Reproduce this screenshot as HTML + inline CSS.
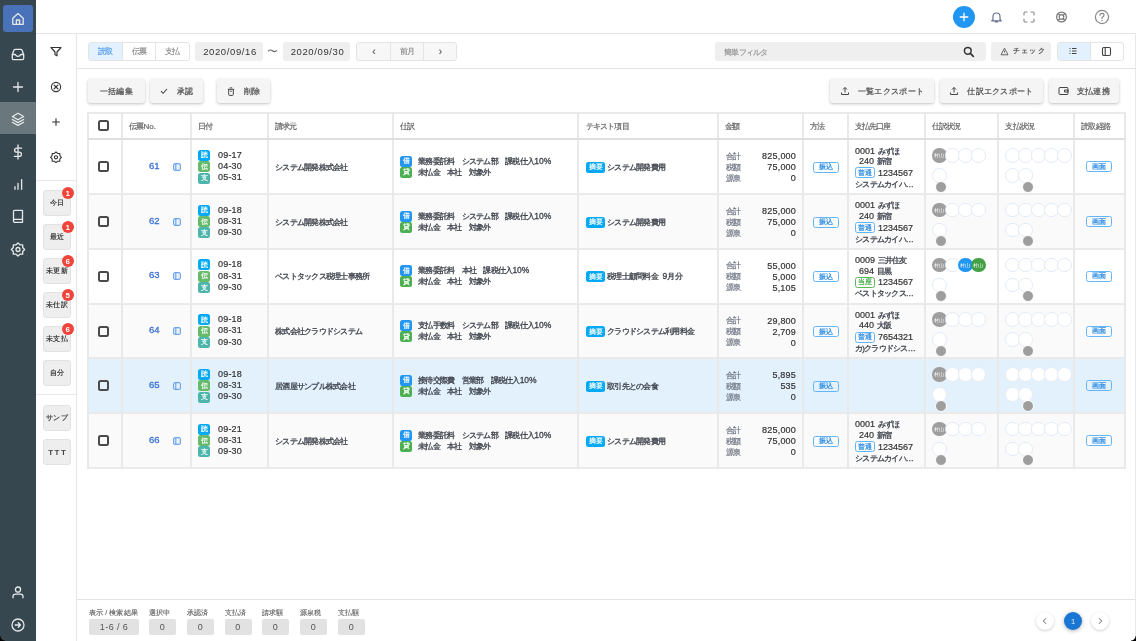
<!DOCTYPE html><html><head><meta charset="utf-8"><style>
*{box-sizing:border-box;margin:0;padding:0}
html,body{width:1136px;height:641px;overflow:hidden;background:#fff;font-family:"Liberation Sans",sans-serif;color:#3a3f47}
.a{position:absolute}
.side{left:0;top:0;width:36px;height:641px;background:#37474f}
.hdr{left:36px;top:0;width:1100px;height:34px;border-bottom:1px solid #e4e4e4;background:#fff}
.sub{left:36px;top:34px;width:41px;height:607px;border-right:1px solid #e4e4e4;background:#fff}
.sbtn{position:absolute;left:7px;width:28px;height:26px;background:#eeeeee;border:1px solid #e2e2e2;border-radius:3px;font-size:7px;font-weight:bold;color:#444;display:flex;align-items:center;justify-content:center;letter-spacing:0.4px}
.badge{position:absolute;width:12px;height:12px;border-radius:50%;background:#f0433a;color:#fff;font-size:8px;font-weight:bold;display:flex;align-items:center;justify-content:center;right:-4px;top:-4px}
.vline{position:absolute;background:#e9e9e9}
.hline{position:absolute;background:#eaeaea}
.th{position:absolute;top:113px;height:26px;font-size:8px;letter-spacing:-0.8px;color:#666;-webkit-text-stroke:0.2px #666;display:flex;align-items:center}
.btn{position:absolute;top:79px;height:24px;background:#f5f5f5;border-radius:3px;box-shadow:0 1px 3px rgba(0,0,0,.25);font-size:8px;-webkit-text-stroke:0.25px #555;color:#555;display:flex;align-items:center;justify-content:center;letter-spacing:0.3px}
.cb{position:absolute;width:11px;height:11px;border:2px solid #4a4a4a;border-radius:2.5px}
.tag{position:absolute;display:flex;align-items:center;justify-content:center;width:12px;height:11px;border-radius:2.5px;color:#fff;font-size:7px;-webkit-text-stroke:0.2px #fff}
.t{position:absolute;white-space:nowrap}
.circ{position:absolute;width:14.5px;height:14.5px;border-radius:50%;border:1px solid #e3eaf5;background:#fff}
.gcirc{position:absolute;width:14.5px;height:14.5px;border-radius:50%;background:#9e9e9e;color:#fff;font-size:5px;display:flex;align-items:center;justify-content:center}
.dot{position:absolute;width:12px;height:12px;border-radius:50%;background:#9e9e9e;border:1px solid #fff}
.ob{position:absolute;display:flex;align-items:center;justify-content:center;border:1.1px solid #64b5f6;color:#2f8fe6;border-radius:2.5px;font-size:7px;-webkit-text-stroke:0.25px currentColor}
.fl{position:absolute;top:607.5px;font-size:7px;letter-spacing:0.1px;-webkit-text-stroke:0.15px #666;color:#666}
.fv{position:absolute;top:619px;height:16px;background:#e2e2e2;border-radius:2px;font-size:9px;letter-spacing:0.4px;color:#555;display:flex;align-items:center;justify-content:center}
</style></head><body><div style="position:absolute;left:0;top:0;width:1136px;height:641px;overflow:hidden;will-change:transform">

<div class="a side">
<div class="a" style="left:3px;top:5px;width:30px;height:27px;background:#4a72b8;border-radius:3px"></div>
<div class="a" style="left:0;top:102px;width:36px;height:32px;background:#6a777d"></div>
<svg style="position:absolute;left:11px;top:12px" width="14" height="14" viewBox="0 0 14 14"><path d="M1.8 6.2 L7 1.6 L12.2 6.2 V12.3 H1.8 Z M5.4 12.3 V8 H8.6 V12.3" stroke="#e6e9ea" stroke-width="1.3" fill="none" stroke-linecap="round" stroke-linejoin="round"/></svg>
<svg style="position:absolute;left:11px;top:48px" width="14" height="13" viewBox="0 0 14 13"><path d="M1.3 6.5 L2.9 2.3 Q3.3 1.4 4.3 1.4 H9.7 Q10.7 1.4 11.1 2.3 L12.7 6.5 V10.3 Q12.7 11.6 11.4 11.6 H2.6 Q1.3 11.6 1.3 10.3 Z M1.3 6.5 H4.3 Q5.1 8.3 7 8.3 Q8.9 8.3 9.7 6.5 H12.7" stroke="#e6e9ea" stroke-width="1.3" fill="none" stroke-linecap="round" stroke-linejoin="round"/></svg>
<svg style="position:absolute;left:12px;top:81px" width="12" height="12" viewBox="0 0 12 12"><path d="M6 1.5 V10.5 M1.5 6 H10.5" stroke="#e6e9ea" stroke-width="1.3" fill="none" stroke-linecap="round" stroke-linejoin="round" stroke-width="1.4"/></svg>
<svg style="position:absolute;left:11px;top:112px" width="14" height="15" viewBox="0 0 14 15"><path d="M7 1.3 L12.6 4.5 L7 7.7 L1.4 4.5 Z M1.4 7.5 L7 10.6 L12.6 7.5 M1.4 10.3 L7 13.4 L12.6 10.3" stroke="#e6e9ea" stroke-width="1.3" fill="none" stroke-linecap="round" stroke-linejoin="round"/></svg>
<svg style="position:absolute;left:12px;top:144px" width="12" height="16" viewBox="0 0 12 16"><path d="M6 1 V15 M9.6 4.2 H5 Q2.6 4.2 2.6 6.2 Q2.6 8.2 5 8.2 H7 Q9.4 8.2 9.4 10.2 Q9.4 12.4 7 12.4 H2.4" stroke="#e6e9ea" stroke-width="1.3" fill="none" stroke-linecap="round" stroke-linejoin="round" stroke-width="1.4"/></svg>
<svg style="position:absolute;left:12px;top:177px" width="12" height="14" viewBox="0 0 12 14"><path d="M3 12.3 V9.7 M6 12.3 V6.3 M9.6 12.3 V2.6" stroke="#e6e9ea" stroke-width="1.3" fill="none" stroke-linecap="round" stroke-linejoin="round" stroke-width="1.6"/></svg>
<svg style="position:absolute;left:11px;top:208px" width="14" height="16" viewBox="0 0 14 16"><path d="M2.5 3.3 Q2.5 2.3 3.5 2.3 H11.5 V14.3 H3.5 Q2.5 14.3 2.5 13.3 Z M2.5 11.3 H11.5" stroke="#e6e9ea" stroke-width="1.3" fill="none" stroke-linecap="round" stroke-linejoin="round"/></svg>
<svg style="position:absolute;left:10px;top:242px" width="16" height="16" viewBox="0 0 16 16"><path d="M8.00 0.90 L9.95 2.79 L12.67 2.83 L12.71 5.55 L14.60 7.50 L12.71 9.45 L12.67 12.17 L9.95 12.21 L8.00 14.10 L6.05 12.21 L3.33 12.17 L3.29 9.45 L1.40 7.50 L3.29 5.55 L3.33 2.83 L6.05 2.79 Z" stroke="#e6e9ea" stroke-width="1.3" fill="none" stroke-linecap="round" stroke-linejoin="round"/><circle cx="8" cy="7.5" r="2" stroke="#e6e9ea" stroke-width="1.3" fill="none" stroke-linecap="round" stroke-linejoin="round"/></svg>
<svg style="position:absolute;left:11px;top:585px" width="14" height="14" viewBox="0 0 14 14"><circle cx="7" cy="4.6" r="2.6" stroke="#e6e9ea" stroke-width="1.3" fill="none" stroke-linecap="round" stroke-linejoin="round"/><path d="M2 12.8 V11.5 Q2 9.2 4.5 9.2 H9.5 Q12 9.2 12 11.5 V12.8" stroke="#e6e9ea" stroke-width="1.3" fill="none" stroke-linecap="round" stroke-linejoin="round"/></svg>
<svg style="position:absolute;left:11px;top:618px" width="14" height="14" viewBox="0 0 14 14"><circle cx="7" cy="7" r="6" stroke="#e6e9ea" stroke-width="1.3" fill="none" stroke-linecap="round" stroke-linejoin="round"/><path d="M4.2 7 H9.5 M7.3 4.8 L9.5 7 L7.3 9.2" stroke="#e6e9ea" stroke-width="1.3" fill="none" stroke-linecap="round" stroke-linejoin="round"/></svg>
</div>
<div class="a hdr"></div>
<div class="a" style="left:953px;top:6px;width:22px;height:22px;border-radius:50%;background:#2196f3"></div>
<svg style="position:absolute;left:958px;top:11px" width="12" height="12" viewBox="0 0 12 12"><path d="M6 2.2 V9.8 M2.2 6 H9.8" stroke="#fff" stroke-width="1.3" stroke-linecap="round"/></svg>
<svg style="position:absolute;left:990px;top:11px" width="13" height="12" viewBox="0 0 13 12"><path d="M3 8.8 V5.5 Q3 2 6.5 2 Q10 2 10 5.5 V8.8 L11.3 9.8 H1.7 Z M5.3 11 H7.7" stroke="#6b7390" stroke-width="1.2" fill="none" stroke-linejoin="round" stroke-linecap="round"/></svg>
<svg style="position:absolute;left:1023px;top:11px" width="12" height="12" viewBox="0 0 12 12"><path d="M1 4 V2 Q1 1 2 1 H4 M8 1 H10 Q11 1 11 2 V4 M11 8 V10 Q11 11 10 11 H8 M4 11 H2 Q1 11 1 10 V8" stroke="#888" stroke-width="1.1" fill="none" stroke-linecap="round"/></svg>
<svg style="position:absolute;left:1055px;top:11px" width="13" height="12" viewBox="0 0 13 12"><circle cx="6.5" cy="6" r="4.9" stroke="#777" stroke-width="1.2" fill="none"/><circle cx="6.5" cy="6" r="2.3" stroke="#777" stroke-width="1.2" fill="none"/><path d="M3 2.5 L4.9 4.4 M10 2.5 L8.1 4.4 M3 9.5 L4.9 7.6 M10 9.5 L8.1 7.6" stroke="#777" stroke-width="1.2"/></svg>
<svg style="position:absolute;left:1094px;top:9px" width="16" height="16" viewBox="0 0 16 16"><circle cx="8" cy="8" r="6.6" stroke="#888" stroke-width="1.2" fill="none"/><path d="M6 6.3 Q6 4.3 8 4.3 Q10 4.3 10 6.1 Q10 7.3 8.7 7.9 Q8 8.3 8 9.4" stroke="#888" stroke-width="1.2" fill="none" stroke-linecap="round"/><circle cx="8" cy="11.4" r="0.75" fill="#888"/></svg>
<div class="a sub">
<svg style="position:absolute;left:14px;top:12px" width="12" height="11" viewBox="0 0 12 11"><path d="M1 1.5 H11 L7 6 V9.8 L5 8.8 V6 Z" stroke="#333" stroke-width="1.2" fill="none" stroke-linejoin="round"/></svg>
<svg style="position:absolute;left:14px;top:47px" width="12" height="12" viewBox="0 0 12 12"><circle cx="6" cy="6" r="4.6" stroke="#333" stroke-width="1.1" fill="none"/><path d="M4.1 4.1 L7.9 7.9 M7.9 4.1 L4.1 7.9" stroke="#333" stroke-width="1.3" stroke-linecap="round"/></svg>
<svg style="position:absolute;left:14px;top:82px" width="12" height="12" viewBox="0 0 12 12"><path d="M6 2.2 V9.8 M2.2 6 H9.8" stroke="#333" stroke-width="1.1"/></svg>
<svg style="position:absolute;left:13px;top:116px" width="14" height="14" viewBox="0 0 14 14"><path d="M7.00 1.90 L8.61 3.42 L10.82 3.48 L10.88 5.69 L12.40 7.30 L10.88 8.91 L10.82 11.12 L8.61 11.18 L7.00 12.70 L5.39 11.18 L3.18 11.12 L3.12 8.91 L1.60 7.30 L3.12 5.69 L3.18 3.48 L5.39 3.42 Z" stroke="#333" stroke-width="1.1" fill="none" stroke-linejoin="round"/><circle cx="7" cy="7.3" r="1.6" stroke="#333" stroke-width="1.1" fill="none"/></svg>
<div class="a" style="left:0;top:146px;width:40px;height:1px;background:#e8e8e8"></div>
<div class="sbtn" style="top:156px">今日<div class="badge">1</div></div>
<div class="sbtn" style="top:190px">最近<div class="badge">1</div></div>
<div class="sbtn" style="top:224px">未更新<div class="badge">6</div></div>
<div class="sbtn" style="top:258px">未仕訳<div class="badge">5</div></div>
<div class="sbtn" style="top:292px">未支払<div class="badge">6</div></div>
<div class="sbtn" style="top:326px">自分</div>
<div class="a" style="left:0;top:360px;width:40px;height:1px;background:#e8e8e8"></div>
<div class="sbtn" style="top:371px">サンプ</div>
<div class="sbtn" style="top:405px"><span style="font-size:8px;letter-spacing:1.5px;margin-left:1.5px">TTT</span></div>
</div>
<div class="a" style="left:1135px;top:34px;width:1px;height:607px;background:#e8e8e8"></div>
<div class="a" style="left:77px;top:68px;width:1058px;height:1px;background:#e4e4e4"></div>
<div class="a" style="left:88px;top:42px;width:102px;height:19px;border:1px solid #e4e4e4;border-radius:3px;display:flex;font-size:8px;letter-spacing:-0.8px;-webkit-text-stroke:0.15px currentColor;color:#888;overflow:hidden"><div style="width:34px;background:#e3f0fd;color:#4a98ea;display:flex;align-items:center;justify-content:center;border-right:1px solid #e4e4e4">読取</div><div style="width:33px;display:flex;align-items:center;justify-content:center;border-right:1px solid #e4e4e4">伝票</div><div style="flex:1;display:flex;align-items:center;justify-content:center">支払</div></div>
<div class="a" style="left:195px;top:42px;width:68px;height:19px;background:#efefef;border-radius:3px;font-size:9.5px;letter-spacing:0.6px;padding-left:2px;color:#333;display:flex;align-items:center;justify-content:center">2020/09/16</div>
<div class="t" style="left:267px;top:44px;font-size:11px;color:#666">〜</div>
<div class="a" style="left:283px;top:42px;width:67px;height:19px;background:#efefef;border-radius:3px;font-size:9.5px;letter-spacing:0.6px;padding-left:2px;color:#333;display:flex;align-items:center;justify-content:center">2020/09/30</div>
<div class="a" style="left:356px;top:42px;width:101px;height:19px;border:1px solid #e4e4e4;border-radius:3px;background:#f7f7f7;display:flex;font-size:8px;letter-spacing:-0.8px;-webkit-text-stroke:0.15px currentColor;color:#888"><div style="width:34px;display:flex;align-items:center;justify-content:center;border-right:1px solid #e4e4e4;font-size:10px;color:#555">‹</div><div style="width:33px;display:flex;align-items:center;justify-content:center;border-right:1px solid #e4e4e4">前月</div><div style="flex:1;display:flex;align-items:center;justify-content:center;font-size:10px;color:#555">›</div></div>
<div class="a" style="left:715px;top:42px;width:271px;height:19px;background:#efefef;border-radius:3px"></div>
<div class="t" style="left:724px;top:46.5px;font-size:8px;letter-spacing:-0.73px;-webkit-text-stroke:0.2px #999;color:#999">簡単フィルタ</div>
<svg style="position:absolute;left:963px;top:46px" width="12" height="12" viewBox="0 0 12 12"><circle cx="4.8" cy="4.8" r="3.4" stroke="#333" stroke-width="1.5" fill="none"/><path d="M7.3 7.3 L10.3 10.3" stroke="#333" stroke-width="1.7" stroke-linecap="round"/></svg>
<div class="a" style="left:991px;top:42px;width:60px;height:19px;background:#efefef;border-radius:3px"></div>
<svg style="position:absolute;left:1000px;top:47px" width="9" height="9" viewBox="0 0 9 9"><path d="M4.5 1.2 L8 7.8 H1 Z M4.5 3.6 V5.4 M4.5 6.5 V6.7" stroke="#555" stroke-width="0.9" fill="none" stroke-linejoin="round"/></svg>
<div class="t" style="left:1013px;top:46px;font-size:7px;font-weight:bold;color:#555;letter-spacing:1.2px">チェック</div>
<div class="a" style="left:1057px;top:42px;width:67px;height:19px;border:1px solid #e4e4e4;border-radius:3px;display:flex;overflow:hidden"><div style="width:33px;background:#e3f0fd;border-right:1px solid #e4e4e4"></div><div style="flex:1"></div></div>
<svg style="position:absolute;left:1068px;top:46px" width="10" height="10" viewBox="0 0 10 10"><path d="M1.5 2.5 H2.5 M1.5 5 H2.5 M1.5 7.5 H2.5 M4 2.5 H8.5 M4 5 H8.5 M4 7.5 H8.5" stroke="#444" stroke-width="1.2"/></svg>
<svg style="position:absolute;left:1101px;top:46px" width="11" height="11" viewBox="0 0 11 11"><rect x="1.5" y="1.5" width="8" height="8" rx="1.2" stroke="#444" stroke-width="1.1" fill="none"/><path d="M4.2 1.5 V9.5" stroke="#444" stroke-width="1.1"/></svg>
<div class="btn" style="left:88px;width:57px">一括編集</div>
<div class="btn" style="left:150px;width:53px"><svg width="8" height="8" viewBox="0 0 8 8" style="margin-right:9px"><path d="M1 4.2 L3.1 6.3 L7 2" stroke="#444" stroke-width="1.1" fill="none"/></svg>承認</div>
<div class="btn" style="left:217px;width:53px"><svg width="8" height="9" viewBox="0 0 8 9" style="margin-right:9px"><path d="M0.8 2.3 H7.2 M2.8 0.9 H5.2 M1.7 2.3 V7.5 Q1.7 8.4 2.6 8.4 H5.4 Q6.3 8.4 6.3 7.5 V2.3 M3.2 4.2 H4.8" stroke="#444" stroke-width="1" fill="none"/></svg>削除</div>
<div class="btn" style="left:830px;width:104px"><svg width="10" height="10" viewBox="0 0 10 10" style="margin-right:8px"><path d="M1.5 6.5 V8.5 H8.5 V6.5 M5 6.5 V1.5 M3 3.5 L5 1.5 L7 3.5" stroke="#444" stroke-width="1" fill="none"/></svg>一覧エクスポート</div>
<div class="btn" style="left:940px;width:103px"><svg width="10" height="10" viewBox="0 0 10 10" style="margin-right:8px"><path d="M1.5 6.5 V8.5 H8.5 V6.5 M5 6.5 V1.5 M3 3.5 L5 1.5 L7 3.5" stroke="#444" stroke-width="1" fill="none"/></svg>仕訳エクスポート</div>
<div class="btn" style="left:1049px;width:70px"><svg width="11" height="10" viewBox="0 0 11 10" style="margin-right:8px"><rect x="1" y="1.5" width="9" height="7" rx="1" stroke="#444" stroke-width="1" fill="none"/><path d="M6.5 4 H10 V6 H6.5 Z" stroke="#444" stroke-width="1" fill="none"/></svg>支払連携</div>
<div class="a" style="left:88px;top:139.5px;width:1037px;height:54.75px;background:#fff"></div>
<div class="a" style="left:88px;top:194.3px;width:1037px;height:54.75px;background:#fafafa"></div>
<div class="a" style="left:88px;top:249.0px;width:1037px;height:54.75px;background:#fff"></div>
<div class="a" style="left:88px;top:303.8px;width:1037px;height:54.75px;background:#fafafa"></div>
<div class="a" style="left:88px;top:358.5px;width:1037px;height:54.75px;background:#e3f1fd"></div>
<div class="a" style="left:88px;top:413.3px;width:1037px;height:54.75px;background:#fafafa"></div>
<div class="hline" style="left:88px;top:112px;width:1037px;height:2px"></div>
<div class="hline" style="left:88px;top:193px;width:1037px;height:2px"></div>
<div class="hline" style="left:88px;top:248px;width:1037px;height:2px"></div>
<div class="hline" style="left:88px;top:303px;width:1037px;height:2px"></div>
<div class="hline" style="left:88px;top:357px;width:1037px;height:2px"></div>
<div class="hline" style="left:88px;top:412px;width:1037px;height:2px"></div>
<div class="hline" style="left:88px;top:467px;width:1037px;height:2px"></div>
<div class="vline" style="left:87px;top:112px;width:2px;height:357px"></div>
<div class="vline" style="left:121px;top:112px;width:2px;height:357px"></div>
<div class="vline" style="left:190px;top:112px;width:2px;height:357px"></div>
<div class="vline" style="left:267px;top:112px;width:2px;height:357px"></div>
<div class="vline" style="left:392px;top:112px;width:2px;height:357px"></div>
<div class="vline" style="left:577px;top:112px;width:2px;height:357px"></div>
<div class="vline" style="left:717px;top:112px;width:2px;height:357px"></div>
<div class="vline" style="left:802px;top:112px;width:2px;height:357px"></div>
<div class="vline" style="left:847px;top:112px;width:2px;height:357px"></div>
<div class="vline" style="left:924px;top:112px;width:2px;height:357px"></div>
<div class="vline" style="left:997px;top:112px;width:2px;height:357px"></div>
<div class="vline" style="left:1073px;top:112px;width:2px;height:357px"></div>
<div class="vline" style="left:1124px;top:112px;width:2px;height:357px"></div>
<div class="hline" style="left:88px;top:138px;width:1037px;height:2px;background:#dedede"></div>
<div class="cb" style="left:98px;top:120px"></div>
<div class="th" style="left:129px">伝票<span style="letter-spacing:0;font-size:8px">No.</span></div>
<div class="th" style="left:198px">日付</div>
<div class="th" style="left:275px">請求元</div>
<div class="th" style="left:400px">仕訳</div>
<div class="th" style="left:585.5px">テキスト項目</div>
<div class="th" style="left:725.3px">金額</div>
<div class="th" style="left:810px">方法</div>
<div class="th" style="left:854.5px">支払先口座</div>
<div class="th" style="left:931.6px">仕訳状況</div>
<div class="th" style="left:1005.4px">支払状況</div>
<div class="th" style="left:1081.3px">読取経路</div>
<div class="cb" style="left:98px;top:161.4px"></div>
<div class="t" style="left:149px;top:159.9px;font-size:9.5px;-webkit-text-stroke:0.3px #3b6fd6;color:#3b6fd6">61</div>
<svg style="position:absolute;left:173px;top:162.875px" width="8" height="8" viewBox="0 0 8 8"><rect x="0.6" y="0.6" width="6.8" height="6.8" rx="1.5" stroke="#6aa3e8" stroke-width="1.1" fill="#e8f1fc"/><path d="M2.8 0.6 V7.4" stroke="#6aa3e8" stroke-width="1.1"/></svg>
<div class="tag" style="left:198px;top:149.9px;background:#03a9f4">読</div>
<div class="t" style="left:218px;top:149.7px;font-size:9px;letter-spacing:0.2px;-webkit-text-stroke:0.2px #333;color:#333">09-17</div>
<div class="tag" style="left:198px;top:161.2px;background:#66bb6a">伝</div>
<div class="t" style="left:218px;top:161.0px;font-size:9px;letter-spacing:0.2px;-webkit-text-stroke:0.2px #333;color:#333">04-30</div>
<div class="tag" style="left:198px;top:172.5px;background:#4db6ac">支</div>
<div class="t" style="left:218px;top:172.3px;font-size:9px;letter-spacing:0.2px;-webkit-text-stroke:0.2px #333;color:#333">05-31</div>
<div class="t" style="left:275px;top:161.9px;font-size:8px;letter-spacing:-0.74px;-webkit-text-stroke:0.3px #3e434c;color:#3e434c">システム開発株式会社</div>
<div class="tag" style="left:400px;top:155.9px;background:#2196f3">借</div>
<div class="tag" style="left:400px;top:166.9px;background:#4caf50">貸</div>
<div class="t" style="left:418px;top:155.9px;font-size:8px;letter-spacing:-0.74px;-webkit-text-stroke:0.3px #3e434c;color:#3e434c">業務委託料　システム部　課税仕入<span style="font-size:8.5px;letter-spacing:0">10%</span></div>
<div class="t" style="left:418px;top:166.9px;font-size:8px;letter-spacing:-0.74px;-webkit-text-stroke:0.3px #3e434c;color:#3e434c">未払金　本社　対象外</div>
<div class="tag" style="left:586px;top:161.9px;background:#03a9f4;width:19px">摘要</div>
<div class="t" style="left:607px;top:161.9px;font-size:8px;letter-spacing:-0.74px;-webkit-text-stroke:0.3px #3e434c;color:#3e434c">システム開発費用</div>
<div class="t" style="left:726px;top:150.9px;font-size:8px;letter-spacing:-1.15px;-webkit-text-stroke:0.2px #6f7684;color:#6f7684">合計</div>
<div class="t" style="right:340px;top:151.3px;font-size:9px;letter-spacing:0.2px;-webkit-text-stroke:0.2px #333;color:#333">825,000</div>
<div class="t" style="left:726px;top:161.9px;font-size:8px;letter-spacing:-1.15px;-webkit-text-stroke:0.2px #6f7684;color:#6f7684">税額</div>
<div class="t" style="right:340px;top:162.3px;font-size:9px;letter-spacing:0.2px;-webkit-text-stroke:0.2px #333;color:#333">75,000</div>
<div class="t" style="left:726px;top:172.9px;font-size:8px;letter-spacing:-1.15px;-webkit-text-stroke:0.2px #6f7684;color:#6f7684">源泉</div>
<div class="t" style="right:340px;top:173.3px;font-size:9px;letter-spacing:0.2px;-webkit-text-stroke:0.2px #333;color:#333">0</div>
<div class="ob" style="left:813px;top:161.9px;width:26px;height:11px">振込</div>
<div class="t" style="left:855px;top:145.6px;font-size:9px;-webkit-text-stroke:0.2px #333;color:#333">0001 <span style="font-size:8px;letter-spacing:-0.74px;-webkit-text-stroke:0.3px #3e434c;color:#3e434c">みずほ</span></div>
<div class="t" style="left:859px;top:156.1px;font-size:9px;-webkit-text-stroke:0.2px #333;color:#333">240 <span style="font-size:8px;letter-spacing:-0.74px;-webkit-text-stroke:0.3px #3e434c;color:#3e434c">新宿</span></div>
<div class="ob" style="left:855px;top:167.2px;width:20px;height:11px;border-color:#64b5f6;color:#2f8fe6">普通</div>
<div class="t" style="left:878px;top:167.7px;font-size:9px;-webkit-text-stroke:0.2px #333;color:#333">1234567</div>
<div class="t" style="left:855px;top:178.9px;font-size:8px;letter-spacing:-0.74px;-webkit-text-stroke:0.3px #3e434c;color:#3e434c">システムカイハ…</div>
<div class="gcirc" style="left:932px;top:148.0px">村山</div>
<div class="circ" style="left:945px;top:148.0px"></div>
<div class="circ" style="left:958px;top:148.0px"></div>
<div class="circ" style="left:971px;top:148.0px"></div>
<div class="circ" style="left:932px;top:168.0px"></div>
<div class="dot" style="left:934.5px;top:180.5px"></div>
<div class="circ" style="left:1005px;top:148.0px"></div>
<div class="circ" style="left:1018px;top:148.0px"></div>
<div class="circ" style="left:1031px;top:148.0px"></div>
<div class="circ" style="left:1044px;top:148.0px"></div>
<div class="circ" style="left:1057px;top:148.0px"></div>
<div class="circ" style="left:1005px;top:168.0px"></div>
<div class="circ" style="left:1018px;top:168.0px"></div>
<div class="dot" style="left:1021.5px;top:180.5px"></div>
<div class="ob" style="left:1086px;top:161.4px;width:26px;height:11px">画面</div>
<div class="cb" style="left:98px;top:216.2px"></div>
<div class="t" style="left:149px;top:214.7px;font-size:9.5px;-webkit-text-stroke:0.3px #3b6fd6;color:#3b6fd6">62</div>
<svg style="position:absolute;left:173px;top:217.675px" width="8" height="8" viewBox="0 0 8 8"><rect x="0.6" y="0.6" width="6.8" height="6.8" rx="1.5" stroke="#6aa3e8" stroke-width="1.1" fill="#e8f1fc"/><path d="M2.8 0.6 V7.4" stroke="#6aa3e8" stroke-width="1.1"/></svg>
<div class="tag" style="left:198px;top:204.7px;background:#03a9f4">読</div>
<div class="t" style="left:218px;top:204.5px;font-size:9px;letter-spacing:0.2px;-webkit-text-stroke:0.2px #333;color:#333">09-18</div>
<div class="tag" style="left:198px;top:216.0px;background:#66bb6a">伝</div>
<div class="t" style="left:218px;top:215.8px;font-size:9px;letter-spacing:0.2px;-webkit-text-stroke:0.2px #333;color:#333">08-31</div>
<div class="tag" style="left:198px;top:227.3px;background:#4db6ac">支</div>
<div class="t" style="left:218px;top:227.1px;font-size:9px;letter-spacing:0.2px;-webkit-text-stroke:0.2px #333;color:#333">09-30</div>
<div class="t" style="left:275px;top:216.7px;font-size:8px;letter-spacing:-0.74px;-webkit-text-stroke:0.3px #3e434c;color:#3e434c">システム開発株式会社</div>
<div class="tag" style="left:400px;top:210.7px;background:#2196f3">借</div>
<div class="tag" style="left:400px;top:221.7px;background:#4caf50">貸</div>
<div class="t" style="left:418px;top:210.7px;font-size:8px;letter-spacing:-0.74px;-webkit-text-stroke:0.3px #3e434c;color:#3e434c">業務委託料　システム部　課税仕入<span style="font-size:8.5px;letter-spacing:0">10%</span></div>
<div class="t" style="left:418px;top:221.7px;font-size:8px;letter-spacing:-0.74px;-webkit-text-stroke:0.3px #3e434c;color:#3e434c">未払金　本社　対象外</div>
<div class="tag" style="left:586px;top:216.7px;background:#03a9f4;width:19px">摘要</div>
<div class="t" style="left:607px;top:216.7px;font-size:8px;letter-spacing:-0.74px;-webkit-text-stroke:0.3px #3e434c;color:#3e434c">システム開発費用</div>
<div class="t" style="left:726px;top:205.7px;font-size:8px;letter-spacing:-1.15px;-webkit-text-stroke:0.2px #6f7684;color:#6f7684">合計</div>
<div class="t" style="right:340px;top:206.1px;font-size:9px;letter-spacing:0.2px;-webkit-text-stroke:0.2px #333;color:#333">825,000</div>
<div class="t" style="left:726px;top:216.7px;font-size:8px;letter-spacing:-1.15px;-webkit-text-stroke:0.2px #6f7684;color:#6f7684">税額</div>
<div class="t" style="right:340px;top:217.1px;font-size:9px;letter-spacing:0.2px;-webkit-text-stroke:0.2px #333;color:#333">75,000</div>
<div class="t" style="left:726px;top:227.7px;font-size:8px;letter-spacing:-1.15px;-webkit-text-stroke:0.2px #6f7684;color:#6f7684">源泉</div>
<div class="t" style="right:340px;top:228.1px;font-size:9px;letter-spacing:0.2px;-webkit-text-stroke:0.2px #333;color:#333">0</div>
<div class="ob" style="left:813px;top:216.7px;width:26px;height:11px">振込</div>
<div class="t" style="left:855px;top:200.4px;font-size:9px;-webkit-text-stroke:0.2px #333;color:#333">0001 <span style="font-size:8px;letter-spacing:-0.74px;-webkit-text-stroke:0.3px #3e434c;color:#3e434c">みずほ</span></div>
<div class="t" style="left:859px;top:210.9px;font-size:9px;-webkit-text-stroke:0.2px #333;color:#333">240 <span style="font-size:8px;letter-spacing:-0.74px;-webkit-text-stroke:0.3px #3e434c;color:#3e434c">新宿</span></div>
<div class="ob" style="left:855px;top:222.0px;width:20px;height:11px;border-color:#64b5f6;color:#2f8fe6">普通</div>
<div class="t" style="left:878px;top:222.5px;font-size:9px;-webkit-text-stroke:0.2px #333;color:#333">1234567</div>
<div class="t" style="left:855px;top:233.7px;font-size:8px;letter-spacing:-0.74px;-webkit-text-stroke:0.3px #3e434c;color:#3e434c">システムカイハ…</div>
<div class="gcirc" style="left:932px;top:202.8px">村山</div>
<div class="circ" style="left:945px;top:202.8px"></div>
<div class="circ" style="left:958px;top:202.8px"></div>
<div class="circ" style="left:971px;top:202.8px"></div>
<div class="circ" style="left:932px;top:222.8px"></div>
<div class="dot" style="left:934.5px;top:235.3px"></div>
<div class="circ" style="left:1005px;top:202.8px"></div>
<div class="circ" style="left:1018px;top:202.8px"></div>
<div class="circ" style="left:1031px;top:202.8px"></div>
<div class="circ" style="left:1044px;top:202.8px"></div>
<div class="circ" style="left:1057px;top:202.8px"></div>
<div class="circ" style="left:1005px;top:222.8px"></div>
<div class="circ" style="left:1018px;top:222.8px"></div>
<div class="dot" style="left:1021.5px;top:235.3px"></div>
<div class="ob" style="left:1086px;top:216.2px;width:26px;height:11px">画面</div>
<div class="cb" style="left:98px;top:270.9px"></div>
<div class="t" style="left:149px;top:269.4px;font-size:9.5px;-webkit-text-stroke:0.3px #3b6fd6;color:#3b6fd6">63</div>
<svg style="position:absolute;left:173px;top:272.375px" width="8" height="8" viewBox="0 0 8 8"><rect x="0.6" y="0.6" width="6.8" height="6.8" rx="1.5" stroke="#6aa3e8" stroke-width="1.1" fill="#e8f1fc"/><path d="M2.8 0.6 V7.4" stroke="#6aa3e8" stroke-width="1.1"/></svg>
<div class="tag" style="left:198px;top:259.4px;background:#03a9f4">読</div>
<div class="t" style="left:218px;top:259.2px;font-size:9px;letter-spacing:0.2px;-webkit-text-stroke:0.2px #333;color:#333">09-18</div>
<div class="tag" style="left:198px;top:270.7px;background:#66bb6a">伝</div>
<div class="t" style="left:218px;top:270.5px;font-size:9px;letter-spacing:0.2px;-webkit-text-stroke:0.2px #333;color:#333">08-31</div>
<div class="tag" style="left:198px;top:282.0px;background:#4db6ac">支</div>
<div class="t" style="left:218px;top:281.8px;font-size:9px;letter-spacing:0.2px;-webkit-text-stroke:0.2px #333;color:#333">09-30</div>
<div class="t" style="left:275px;top:271.4px;font-size:8px;letter-spacing:-0.74px;-webkit-text-stroke:0.3px #3e434c;color:#3e434c">ベストタックス税理士事務所</div>
<div class="tag" style="left:400px;top:265.4px;background:#2196f3">借</div>
<div class="tag" style="left:400px;top:276.4px;background:#4caf50">貸</div>
<div class="t" style="left:418px;top:265.4px;font-size:8px;letter-spacing:-0.74px;-webkit-text-stroke:0.3px #3e434c;color:#3e434c">業務委託料　本社　課税仕入<span style="font-size:8.5px;letter-spacing:0">10%</span></div>
<div class="t" style="left:418px;top:276.4px;font-size:8px;letter-spacing:-0.74px;-webkit-text-stroke:0.3px #3e434c;color:#3e434c">未払金　本社　対象外</div>
<div class="tag" style="left:586px;top:271.4px;background:#03a9f4;width:19px">摘要</div>
<div class="t" style="left:607px;top:271.4px;font-size:8px;letter-spacing:-0.74px;-webkit-text-stroke:0.3px #3e434c;color:#3e434c">税理士顧問料金<span style="letter-spacing:2.5px">&nbsp;</span><span style="font-size:8.5px;letter-spacing:0">9</span>月分</div>
<div class="t" style="left:726px;top:260.4px;font-size:8px;letter-spacing:-1.15px;-webkit-text-stroke:0.2px #6f7684;color:#6f7684">合計</div>
<div class="t" style="right:340px;top:260.8px;font-size:9px;letter-spacing:0.2px;-webkit-text-stroke:0.2px #333;color:#333">55,000</div>
<div class="t" style="left:726px;top:271.4px;font-size:8px;letter-spacing:-1.15px;-webkit-text-stroke:0.2px #6f7684;color:#6f7684">税額</div>
<div class="t" style="right:340px;top:271.8px;font-size:9px;letter-spacing:0.2px;-webkit-text-stroke:0.2px #333;color:#333">5,000</div>
<div class="t" style="left:726px;top:282.4px;font-size:8px;letter-spacing:-1.15px;-webkit-text-stroke:0.2px #6f7684;color:#6f7684">源泉</div>
<div class="t" style="right:340px;top:282.8px;font-size:9px;letter-spacing:0.2px;-webkit-text-stroke:0.2px #333;color:#333">5,105</div>
<div class="ob" style="left:813px;top:271.4px;width:26px;height:11px">振込</div>
<div class="t" style="left:855px;top:255.1px;font-size:9px;-webkit-text-stroke:0.2px #333;color:#333">0009 <span style="font-size:8px;letter-spacing:-0.74px;-webkit-text-stroke:0.3px #3e434c;color:#3e434c">三井住友</span></div>
<div class="t" style="left:859px;top:265.6px;font-size:9px;-webkit-text-stroke:0.2px #333;color:#333">694 <span style="font-size:8px;letter-spacing:-0.74px;-webkit-text-stroke:0.3px #3e434c;color:#3e434c">目黒</span></div>
<div class="ob" style="left:855px;top:276.7px;width:20px;height:11px;border-color:#5cb85c;color:#4caf50">当座</div>
<div class="t" style="left:878px;top:277.2px;font-size:9px;-webkit-text-stroke:0.2px #333;color:#333">1234567</div>
<div class="t" style="left:855px;top:288.4px;font-size:8px;letter-spacing:-0.74px;-webkit-text-stroke:0.3px #3e434c;color:#3e434c">ベストタックス…</div>
<div class="gcirc" style="left:932px;top:257.5px">村山</div>
<div class="circ" style="left:945px;top:257.5px"></div>
<div class="gcirc" style="left:958px;top:257.5px;background:#2196f3">村山</div>
<div class="gcirc" style="left:971px;top:257.5px;background:#43a047">村山</div>
<div class="circ" style="left:932px;top:277.5px"></div>
<div class="dot" style="left:934.5px;top:290.0px"></div>
<div class="circ" style="left:1005px;top:257.5px"></div>
<div class="circ" style="left:1018px;top:257.5px"></div>
<div class="circ" style="left:1031px;top:257.5px"></div>
<div class="circ" style="left:1044px;top:257.5px"></div>
<div class="circ" style="left:1057px;top:257.5px"></div>
<div class="circ" style="left:1005px;top:277.5px"></div>
<div class="circ" style="left:1018px;top:277.5px"></div>
<div class="dot" style="left:1021.5px;top:290.0px"></div>
<div class="ob" style="left:1086px;top:270.9px;width:26px;height:11px">画面</div>
<div class="cb" style="left:98px;top:325.7px"></div>
<div class="t" style="left:149px;top:324.2px;font-size:9.5px;-webkit-text-stroke:0.3px #3b6fd6;color:#3b6fd6">64</div>
<svg style="position:absolute;left:173px;top:327.175px" width="8" height="8" viewBox="0 0 8 8"><rect x="0.6" y="0.6" width="6.8" height="6.8" rx="1.5" stroke="#6aa3e8" stroke-width="1.1" fill="#e8f1fc"/><path d="M2.8 0.6 V7.4" stroke="#6aa3e8" stroke-width="1.1"/></svg>
<div class="tag" style="left:198px;top:314.2px;background:#03a9f4">読</div>
<div class="t" style="left:218px;top:314.0px;font-size:9px;letter-spacing:0.2px;-webkit-text-stroke:0.2px #333;color:#333">09-18</div>
<div class="tag" style="left:198px;top:325.5px;background:#66bb6a">伝</div>
<div class="t" style="left:218px;top:325.3px;font-size:9px;letter-spacing:0.2px;-webkit-text-stroke:0.2px #333;color:#333">08-31</div>
<div class="tag" style="left:198px;top:336.8px;background:#4db6ac">支</div>
<div class="t" style="left:218px;top:336.6px;font-size:9px;letter-spacing:0.2px;-webkit-text-stroke:0.2px #333;color:#333">09-30</div>
<div class="t" style="left:275px;top:326.2px;font-size:8px;letter-spacing:-0.74px;-webkit-text-stroke:0.3px #3e434c;color:#3e434c">株式会社クラウドシステム</div>
<div class="tag" style="left:400px;top:320.2px;background:#2196f3">借</div>
<div class="tag" style="left:400px;top:331.2px;background:#4caf50">貸</div>
<div class="t" style="left:418px;top:320.2px;font-size:8px;letter-spacing:-0.74px;-webkit-text-stroke:0.3px #3e434c;color:#3e434c">支払手数料　システム部　課税仕入<span style="font-size:8.5px;letter-spacing:0">10%</span></div>
<div class="t" style="left:418px;top:331.2px;font-size:8px;letter-spacing:-0.74px;-webkit-text-stroke:0.3px #3e434c;color:#3e434c">未払金　本社　対象外</div>
<div class="tag" style="left:586px;top:326.2px;background:#03a9f4;width:19px">摘要</div>
<div class="t" style="left:607px;top:326.2px;font-size:8px;letter-spacing:-0.74px;-webkit-text-stroke:0.3px #3e434c;color:#3e434c">クラウドシステム利用料金</div>
<div class="t" style="left:726px;top:315.2px;font-size:8px;letter-spacing:-1.15px;-webkit-text-stroke:0.2px #6f7684;color:#6f7684">合計</div>
<div class="t" style="right:340px;top:315.6px;font-size:9px;letter-spacing:0.2px;-webkit-text-stroke:0.2px #333;color:#333">29,800</div>
<div class="t" style="left:726px;top:326.2px;font-size:8px;letter-spacing:-1.15px;-webkit-text-stroke:0.2px #6f7684;color:#6f7684">税額</div>
<div class="t" style="right:340px;top:326.6px;font-size:9px;letter-spacing:0.2px;-webkit-text-stroke:0.2px #333;color:#333">2,709</div>
<div class="t" style="left:726px;top:337.2px;font-size:8px;letter-spacing:-1.15px;-webkit-text-stroke:0.2px #6f7684;color:#6f7684">源泉</div>
<div class="t" style="right:340px;top:337.6px;font-size:9px;letter-spacing:0.2px;-webkit-text-stroke:0.2px #333;color:#333">0</div>
<div class="ob" style="left:813px;top:326.2px;width:26px;height:11px">振込</div>
<div class="t" style="left:855px;top:309.9px;font-size:9px;-webkit-text-stroke:0.2px #333;color:#333">0001 <span style="font-size:8px;letter-spacing:-0.74px;-webkit-text-stroke:0.3px #3e434c;color:#3e434c">みずほ</span></div>
<div class="t" style="left:859px;top:320.4px;font-size:9px;-webkit-text-stroke:0.2px #333;color:#333">440 <span style="font-size:8px;letter-spacing:-0.74px;-webkit-text-stroke:0.3px #3e434c;color:#3e434c">大阪</span></div>
<div class="ob" style="left:855px;top:331.5px;width:20px;height:11px;border-color:#64b5f6;color:#2f8fe6">普通</div>
<div class="t" style="left:878px;top:332.0px;font-size:9px;-webkit-text-stroke:0.2px #333;color:#333">7654321</div>
<div class="t" style="left:855px;top:343.2px;font-size:8px;letter-spacing:-0.74px;-webkit-text-stroke:0.3px #3e434c;color:#3e434c">カ)クラウドシス…</div>
<div class="gcirc" style="left:932px;top:312.3px">村山</div>
<div class="circ" style="left:945px;top:312.3px"></div>
<div class="circ" style="left:958px;top:312.3px"></div>
<div class="circ" style="left:971px;top:312.3px"></div>
<div class="circ" style="left:932px;top:332.3px"></div>
<div class="dot" style="left:934.5px;top:344.8px"></div>
<div class="circ" style="left:1005px;top:312.3px"></div>
<div class="circ" style="left:1018px;top:312.3px"></div>
<div class="circ" style="left:1031px;top:312.3px"></div>
<div class="circ" style="left:1044px;top:312.3px"></div>
<div class="circ" style="left:1057px;top:312.3px"></div>
<div class="circ" style="left:1005px;top:332.3px"></div>
<div class="circ" style="left:1018px;top:332.3px"></div>
<div class="dot" style="left:1021.5px;top:344.8px"></div>
<div class="ob" style="left:1086px;top:325.7px;width:26px;height:11px">画面</div>
<div class="cb" style="left:98px;top:380.4px"></div>
<div class="t" style="left:149px;top:378.9px;font-size:9.5px;-webkit-text-stroke:0.3px #3b6fd6;color:#3b6fd6">65</div>
<svg style="position:absolute;left:173px;top:381.875px" width="8" height="8" viewBox="0 0 8 8"><rect x="0.6" y="0.6" width="6.8" height="6.8" rx="1.5" stroke="#6aa3e8" stroke-width="1.1" fill="#e8f1fc"/><path d="M2.8 0.6 V7.4" stroke="#6aa3e8" stroke-width="1.1"/></svg>
<div class="tag" style="left:198px;top:368.9px;background:#03a9f4">読</div>
<div class="t" style="left:218px;top:368.7px;font-size:9px;letter-spacing:0.2px;-webkit-text-stroke:0.2px #333;color:#333">09-18</div>
<div class="tag" style="left:198px;top:380.2px;background:#66bb6a">伝</div>
<div class="t" style="left:218px;top:380.0px;font-size:9px;letter-spacing:0.2px;-webkit-text-stroke:0.2px #333;color:#333">08-31</div>
<div class="tag" style="left:198px;top:391.5px;background:#4db6ac">支</div>
<div class="t" style="left:218px;top:391.3px;font-size:9px;letter-spacing:0.2px;-webkit-text-stroke:0.2px #333;color:#333">09-30</div>
<div class="t" style="left:275px;top:380.9px;font-size:8px;letter-spacing:-0.74px;-webkit-text-stroke:0.3px #3e434c;color:#3e434c">居酒屋サンプル株式会社</div>
<div class="tag" style="left:400px;top:374.9px;background:#2196f3">借</div>
<div class="tag" style="left:400px;top:385.9px;background:#4caf50">貸</div>
<div class="t" style="left:418px;top:374.9px;font-size:8px;letter-spacing:-0.74px;-webkit-text-stroke:0.3px #3e434c;color:#3e434c">接待交際費　営業部　課税仕入<span style="font-size:8.5px;letter-spacing:0">10%</span></div>
<div class="t" style="left:418px;top:385.9px;font-size:8px;letter-spacing:-0.74px;-webkit-text-stroke:0.3px #3e434c;color:#3e434c">未払金　本社　対象外</div>
<div class="tag" style="left:586px;top:380.9px;background:#03a9f4;width:19px">摘要</div>
<div class="t" style="left:607px;top:380.9px;font-size:8px;letter-spacing:-0.74px;-webkit-text-stroke:0.3px #3e434c;color:#3e434c">取引先との会食</div>
<div class="t" style="left:726px;top:369.9px;font-size:8px;letter-spacing:-1.15px;-webkit-text-stroke:0.2px #6f7684;color:#6f7684">合計</div>
<div class="t" style="right:340px;top:370.3px;font-size:9px;letter-spacing:0.2px;-webkit-text-stroke:0.2px #333;color:#333">5,895</div>
<div class="t" style="left:726px;top:380.9px;font-size:8px;letter-spacing:-1.15px;-webkit-text-stroke:0.2px #6f7684;color:#6f7684">税額</div>
<div class="t" style="right:340px;top:381.3px;font-size:9px;letter-spacing:0.2px;-webkit-text-stroke:0.2px #333;color:#333">535</div>
<div class="t" style="left:726px;top:391.9px;font-size:8px;letter-spacing:-1.15px;-webkit-text-stroke:0.2px #6f7684;color:#6f7684">源泉</div>
<div class="t" style="right:340px;top:392.3px;font-size:9px;letter-spacing:0.2px;-webkit-text-stroke:0.2px #333;color:#333">0</div>
<div class="ob" style="left:813px;top:380.9px;width:26px;height:11px">振込</div>
<div class="gcirc" style="left:932px;top:367.0px">村山</div>
<div class="circ" style="left:945px;top:367.0px"></div>
<div class="circ" style="left:958px;top:367.0px"></div>
<div class="circ" style="left:971px;top:367.0px"></div>
<div class="circ" style="left:932px;top:387.0px"></div>
<div class="dot" style="left:934.5px;top:399.5px"></div>
<div class="circ" style="left:1005px;top:367.0px"></div>
<div class="circ" style="left:1018px;top:367.0px"></div>
<div class="circ" style="left:1031px;top:367.0px"></div>
<div class="circ" style="left:1044px;top:367.0px"></div>
<div class="circ" style="left:1057px;top:367.0px"></div>
<div class="circ" style="left:1005px;top:387.0px"></div>
<div class="circ" style="left:1018px;top:387.0px"></div>
<div class="dot" style="left:1021.5px;top:399.5px"></div>
<div class="ob" style="left:1086px;top:380.4px;width:26px;height:11px">画面</div>
<div class="cb" style="left:98px;top:435.2px"></div>
<div class="t" style="left:149px;top:433.7px;font-size:9.5px;-webkit-text-stroke:0.3px #3b6fd6;color:#3b6fd6">66</div>
<svg style="position:absolute;left:173px;top:436.675px" width="8" height="8" viewBox="0 0 8 8"><rect x="0.6" y="0.6" width="6.8" height="6.8" rx="1.5" stroke="#6aa3e8" stroke-width="1.1" fill="#e8f1fc"/><path d="M2.8 0.6 V7.4" stroke="#6aa3e8" stroke-width="1.1"/></svg>
<div class="tag" style="left:198px;top:423.7px;background:#03a9f4">読</div>
<div class="t" style="left:218px;top:423.5px;font-size:9px;letter-spacing:0.2px;-webkit-text-stroke:0.2px #333;color:#333">09-21</div>
<div class="tag" style="left:198px;top:435.0px;background:#66bb6a">伝</div>
<div class="t" style="left:218px;top:434.8px;font-size:9px;letter-spacing:0.2px;-webkit-text-stroke:0.2px #333;color:#333">08-31</div>
<div class="tag" style="left:198px;top:446.3px;background:#4db6ac">支</div>
<div class="t" style="left:218px;top:446.1px;font-size:9px;letter-spacing:0.2px;-webkit-text-stroke:0.2px #333;color:#333">09-30</div>
<div class="t" style="left:275px;top:435.7px;font-size:8px;letter-spacing:-0.74px;-webkit-text-stroke:0.3px #3e434c;color:#3e434c">システム開発株式会社</div>
<div class="tag" style="left:400px;top:429.7px;background:#2196f3">借</div>
<div class="tag" style="left:400px;top:440.7px;background:#4caf50">貸</div>
<div class="t" style="left:418px;top:429.7px;font-size:8px;letter-spacing:-0.74px;-webkit-text-stroke:0.3px #3e434c;color:#3e434c">業務委託料　システム部　課税仕入<span style="font-size:8.5px;letter-spacing:0">10%</span></div>
<div class="t" style="left:418px;top:440.7px;font-size:8px;letter-spacing:-0.74px;-webkit-text-stroke:0.3px #3e434c;color:#3e434c">未払金　本社　対象外</div>
<div class="tag" style="left:586px;top:435.7px;background:#03a9f4;width:19px">摘要</div>
<div class="t" style="left:607px;top:435.7px;font-size:8px;letter-spacing:-0.74px;-webkit-text-stroke:0.3px #3e434c;color:#3e434c">システム開発費用</div>
<div class="t" style="left:726px;top:424.7px;font-size:8px;letter-spacing:-1.15px;-webkit-text-stroke:0.2px #6f7684;color:#6f7684">合計</div>
<div class="t" style="right:340px;top:425.1px;font-size:9px;letter-spacing:0.2px;-webkit-text-stroke:0.2px #333;color:#333">825,000</div>
<div class="t" style="left:726px;top:435.7px;font-size:8px;letter-spacing:-1.15px;-webkit-text-stroke:0.2px #6f7684;color:#6f7684">税額</div>
<div class="t" style="right:340px;top:436.1px;font-size:9px;letter-spacing:0.2px;-webkit-text-stroke:0.2px #333;color:#333">75,000</div>
<div class="t" style="left:726px;top:446.7px;font-size:8px;letter-spacing:-1.15px;-webkit-text-stroke:0.2px #6f7684;color:#6f7684">源泉</div>
<div class="t" style="right:340px;top:447.1px;font-size:9px;letter-spacing:0.2px;-webkit-text-stroke:0.2px #333;color:#333">0</div>
<div class="ob" style="left:813px;top:435.7px;width:26px;height:11px">振込</div>
<div class="t" style="left:855px;top:419.4px;font-size:9px;-webkit-text-stroke:0.2px #333;color:#333">0001 <span style="font-size:8px;letter-spacing:-0.74px;-webkit-text-stroke:0.3px #3e434c;color:#3e434c">みずほ</span></div>
<div class="t" style="left:859px;top:429.9px;font-size:9px;-webkit-text-stroke:0.2px #333;color:#333">240 <span style="font-size:8px;letter-spacing:-0.74px;-webkit-text-stroke:0.3px #3e434c;color:#3e434c">新宿</span></div>
<div class="ob" style="left:855px;top:441.0px;width:20px;height:11px;border-color:#64b5f6;color:#2f8fe6">普通</div>
<div class="t" style="left:878px;top:441.5px;font-size:9px;-webkit-text-stroke:0.2px #333;color:#333">1234567</div>
<div class="t" style="left:855px;top:452.7px;font-size:8px;letter-spacing:-0.74px;-webkit-text-stroke:0.3px #3e434c;color:#3e434c">システムカイハ…</div>
<div class="gcirc" style="left:932px;top:421.8px">村山</div>
<div class="circ" style="left:945px;top:421.8px"></div>
<div class="circ" style="left:958px;top:421.8px"></div>
<div class="circ" style="left:971px;top:421.8px"></div>
<div class="circ" style="left:932px;top:441.8px"></div>
<div class="dot" style="left:934.5px;top:454.3px"></div>
<div class="circ" style="left:1005px;top:421.8px"></div>
<div class="circ" style="left:1018px;top:421.8px"></div>
<div class="circ" style="left:1031px;top:421.8px"></div>
<div class="circ" style="left:1044px;top:421.8px"></div>
<div class="circ" style="left:1057px;top:421.8px"></div>
<div class="circ" style="left:1005px;top:441.8px"></div>
<div class="circ" style="left:1018px;top:441.8px"></div>
<div class="dot" style="left:1021.5px;top:454.3px"></div>
<div class="ob" style="left:1086px;top:435.2px;width:26px;height:11px">画面</div>
<div class="a" style="left:77px;top:599px;width:1058px;height:1px;background:#e4e4e4"></div>
<div class="fl" style="left:89px">表示 / 検索結果</div>
<div class="fv" style="left:89px;width:50px">1-6 / 6</div>
<div class="fl" style="left:149px">選択中</div>
<div class="fv" style="left:149px;width:27px">0</div>
<div class="fl" style="left:187px">承認済</div>
<div class="fv" style="left:187px;width:27px">0</div>
<div class="fl" style="left:224.5px">支払済</div>
<div class="fv" style="left:224.5px;width:27px">0</div>
<div class="fl" style="left:262px">請求額</div>
<div class="fv" style="left:262px;width:27px">0</div>
<div class="fl" style="left:300px">源泉税</div>
<div class="fv" style="left:300px;width:27px">0</div>
<div class="fl" style="left:338px">支払額</div>
<div class="fv" style="left:338px;width:27px">0</div>
<div class="a" style="left:1036px;top:612px;width:18px;height:18px;border-radius:50%;background:#fff;box-shadow:0 1px 3px rgba(0,0,0,.2)"></div>
<svg style="position:absolute;left:1040px;top:616px" width="10" height="10" viewBox="0 0 10 10"><path d="M6 2.2 L3.3 5 L6 7.8" stroke="#666" stroke-width="1" fill="none"/></svg>
<div class="a" style="left:1064px;top:612px;width:18px;height:18px;border-radius:50%;background:#1976d2;box-shadow:0 1px 4px rgba(0,0,0,.3);color:#dfeefc;font-size:7.5px;display:flex;align-items:center;justify-content:center">1</div>
<div class="a" style="left:1091px;top:612px;width:18px;height:18px;border-radius:50%;background:#fff;box-shadow:0 1px 3px rgba(0,0,0,.2)"></div>
<svg style="position:absolute;left:1095px;top:616px" width="10" height="10" viewBox="0 0 10 10"><path d="M4 2.2 L6.7 5 L4 7.8" stroke="#666" stroke-width="1" fill="none"/></svg>
<div class="a" style="left:1131px;top:636px;width:5px;height:5px;background:radial-gradient(circle at 0 0, rgba(0,0,0,0) 4px, #000 5px)"></div>
<div class="a" style="left:0;top:636px;width:5px;height:5px;background:radial-gradient(circle at 100% 0, rgba(0,0,0,0) 4px, #000 5px)"></div>
</div></body></html>
